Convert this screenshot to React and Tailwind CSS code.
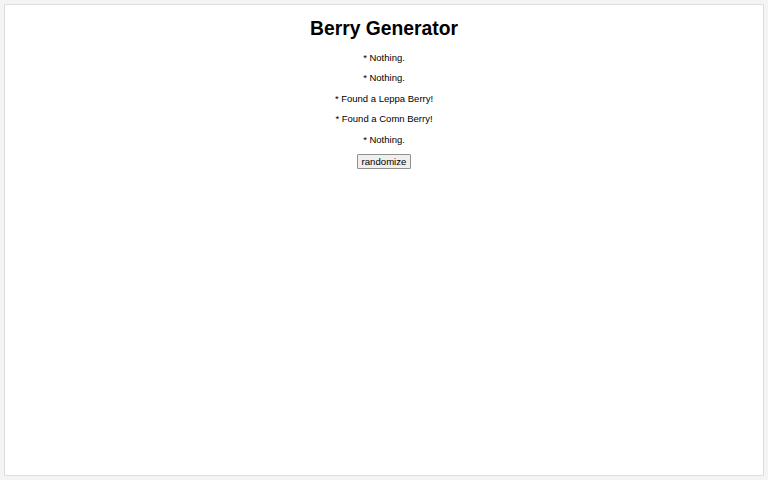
import React, { useState } from "react";

const BERRIES = ["Oran", "Sitrus", "Leppa", "Comn", "Pecha", "Rawst", "Cheri"];

const rollOne = () => {
  if (Math.random() < 0.5) return "* Nothing.";
  const b = BERRIES[Math.floor(Math.random() * BERRIES.length)];
  return `* Found a ${b} Berry!`;
};

const App = () => {
  const [results, setResults] = useState([
    "* Nothing.",
    "* Nothing.",
    "* Found a Leppa Berry!",
    "* Found a Comn Berry!",
    "* Nothing.",
  ]);

  const randomize = () => {
    setResults(results.map(() => rollOne()));
  };

  return (
    <div
      className="h-screen bg-[#f4f4f4] p-1"
      style={{ fontFamily: '"Liberation Sans", Arial, sans-serif' }}
    >
      <div className="h-full border border-[#dedede] bg-white flex flex-col items-center text-black">
        <h1 className="mt-[13px] text-[19.3px] leading-[22px] font-bold">
          Berry Generator
        </h1>
        <div className="mt-[2px] flex flex-col items-center">
          {results.map((r, i) => (
            <p key={i} className="mt-[9.5px] text-[9.5px] leading-[11px]">
              {r}
            </p>
          ))}
        </div>
        <button
          type="button"
          onClick={randomize}
          className="mt-[9px] h-[15px] px-[4px] border border-[#8f8f8f] bg-[#efefef] text-[9.6px] leading-[11px] rounded-[1px]"
        >
          randomize
        </button>
      </div>
    </div>
  );
};

export default App;
